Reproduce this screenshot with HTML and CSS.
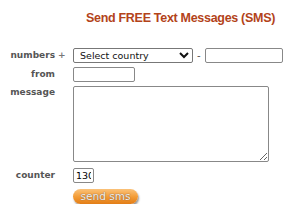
FILE: index.html
```html
<!DOCTYPE html>
<html>
<head>
<meta charset="utf-8">
<link rel="stylesheet" href="styles.css">
</head>
<body>
<div class="page">
  <h1 class="title">Send FREE Text Messages (SMS)</h1>
  <form class="form">
    <div class="label">numbers</div>
    <div class="plus">+</div>
    <div class="field numbers">
      <select class="select"><option>Select country</option></select>
      <span class="dash">-</span>
      <input class="input phone" type="text">
    </div>

    <div class="label">from</div>
    <div></div>
    <div class="field"><input class="input from" type="text"></div>

    <div class="label label-top">message</div>
    <div></div>
    <div class="field"><textarea class="textarea"></textarea></div>

    <div class="label row-gap">counter</div>
    <div class="row-gap"></div>
    <div class="field row-gap"><input class="input counter" type="text" value="130"></div>

    <div class="row-gap"></div>
    <div class="row-gap"></div>
    <div class="field row-gap"><button type="button" class="send">send sms</button></div>
  </form>
</div>
</body>
</html>
```
FILE: styles.css
```css
html, body { margin: 0; padding: 0; background: #fff; }
body { font-family: "DejaVu Sans", Verdana, sans-serif; }
.page { padding-top: 10px; }
.title {
  margin: 0 0 0 86px;
  font-family: "Liberation Sans", Arial, sans-serif;
  font-size: 12.5px;
  letter-spacing: -0.3px;
  font-weight: bold;
  color: #b3431a;
  line-height: 17px;
  white-space: nowrap;
}
.form {
  margin-top: 21px;
  display: grid;
  grid-template-columns: 55px 18px auto;
  row-gap: 4px;
  align-items: center;
}
.row-gap { margin-top: 2px; }
.field { display: flex; align-items: center; }
.label {
  text-align: right;
  font-size: 9px;
  line-height: 11px;
  font-weight: bold;
  color: #555;
}
.label-top { align-self: start; padding-top: 1px; }
.plus { font-size: 9px; line-height: 11px; font-weight: bold; color: #777; padding-left: 3px; }
.numbers { display: flex; align-items: center; }
.select {
  width: 120px; height: 15px; box-sizing: border-box; margin: 0;
  font-family: "DejaVu Sans", sans-serif; font-size: 9.5px;
  border: 1px solid #777; border-radius: 2px; background: #fff; padding: 0 2px;
  color: #111;
}
.dash { font-size: 10px; line-height: 11px; color: #555; margin: 0 4px 0 4px; }
.input {
  box-sizing: border-box; height: 15px; margin: 0;
  border: 1px solid #888; border-radius: 2px; padding: 0 2px;
  font-family: "DejaVu Sans", sans-serif; font-size: 9.5px;
}
.phone { width: 78px; }
.from { width: 62px; }
.counter { width: 21px; }
.textarea {
  display: block; box-sizing: border-box; margin: 0;
  width: 196px; height: 76px;
  border: 1px solid #888; border-radius: 2px;
}
.send {
  width: 65px; height: 15px; padding: 0; margin: 0;
  border: 0; border-radius: 8px;
  background: linear-gradient(#fac27a, #f39a32 55%, #e27d18);
  box-shadow: 1px 2px 2px rgba(0,0,0,0.4);
  color: #f4efe8;
  font-family: "DejaVu Sans", sans-serif; font-size: 10.5px; line-height: 15px;
  text-shadow: 0 0 1px #8a6a50, 0 0 1px #8a6a50;
}
```
